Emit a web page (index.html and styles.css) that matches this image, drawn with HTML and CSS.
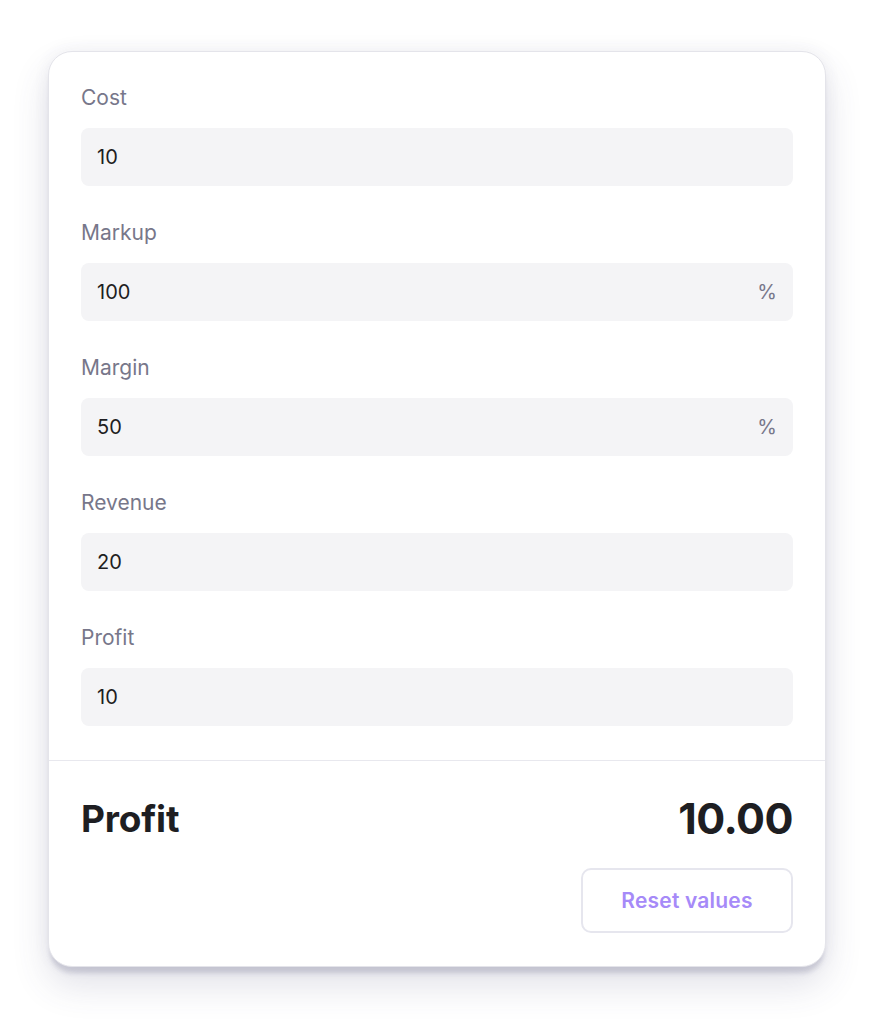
FILE: index.html
```html
<!DOCTYPE html>
<html>
<head>
<meta charset="utf-8">
<link rel="stylesheet" href="styles.css">
</head>
<body>
<div class="card">
  <div class="fields">
    <div class="field">
      <label class="label">Cost</label>
      <div class="input"><span class="value">10</span></div>
    </div>
    <div class="field">
      <label class="label">Markup</label>
      <div class="input"><span class="value">100</span><span class="unit">%</span></div>
    </div>
    <div class="field">
      <label class="label">Margin</label>
      <div class="input"><span class="value">50</span><span class="unit">%</span></div>
    </div>
    <div class="field">
      <label class="label">Revenue</label>
      <div class="input"><span class="value">20</span></div>
    </div>
    <div class="field">
      <label class="label">Profit</label>
      <div class="input"><span class="value">10</span></div>
    </div>
  </div>
  <div class="footer">
    <div class="result">
      <span class="result-label">Profit</span>
      <span class="result-value">10.00</span>
    </div>
    <div class="actions">
      <button class="reset">Reset values</button>
    </div>
  </div>
</div>
</body>
</html>
```
FILE: styles.css
```css
html, body {
  margin: 0;
  padding: 0;
  background: #ffffff;
  font-family: Inter, "Noto Sans", sans-serif;
}
body {
  padding: 51px 0 0 48px;
  min-height: 1024px;
  box-sizing: border-box;
}
.card {
  width: 778px;
  box-sizing: border-box;
  border: 1px solid #e4e4ea;
  border-radius: 24px;
  background: #fff;
  box-shadow: 0 8px 4px -2px rgba(70, 70, 110, 0.18), 0 18px 36px rgba(70, 70, 110, 0.16), 0 0 16px rgba(70, 70, 110, 0.07);
  overflow: hidden;
}
.fields {
  display: flex;
  flex-direction: column;
  gap: 32px;
  padding: 31px 32px 34px;
  border-bottom: 1px solid #e8e8ee;
}
.field {
  display: flex;
  flex-direction: column;
  gap: 15px;
}
.label {
  font-size: 21px;
  line-height: 30px;
  color: #77778a;
}
.input {
  height: 58px;
  background: #f4f4f6;
  border-radius: 8px;
  display: flex;
  align-items: center;
  justify-content: space-between;
  padding: 0 16px;
}
.value {
  font-size: 20px;
  color: #1e1e22;
}
.unit {
  font-size: 20px;
  color: #77778a;
}
.footer {
  padding: 31px 32px 33px;
  display: flex;
  flex-direction: column;
  gap: 24px;
}
.result {
  display: flex;
  justify-content: space-between;
  align-items: center;
  height: 52px;
}
.result-label {
  font-size: 37px;
  font-weight: 700;
  color: #1e1e22;
  letter-spacing: -0.2px;
}
.result-value {
  font-size: 43px;
  font-weight: 700;
  color: #1e1e22;
  letter-spacing: -0.5px;
}
.actions {
  display: flex;
  justify-content: flex-end;
}
.reset {
  width: 212px;
  height: 65px;
  box-sizing: border-box;
  border: 2px solid #e6e6ee;
  border-radius: 10px;
  background: #fff;
  color: #a68af8;
  font-family: Inter, "Noto Sans", sans-serif;
  font-size: 21px;
  font-weight: 600;
  letter-spacing: 0.2px;
}
```
